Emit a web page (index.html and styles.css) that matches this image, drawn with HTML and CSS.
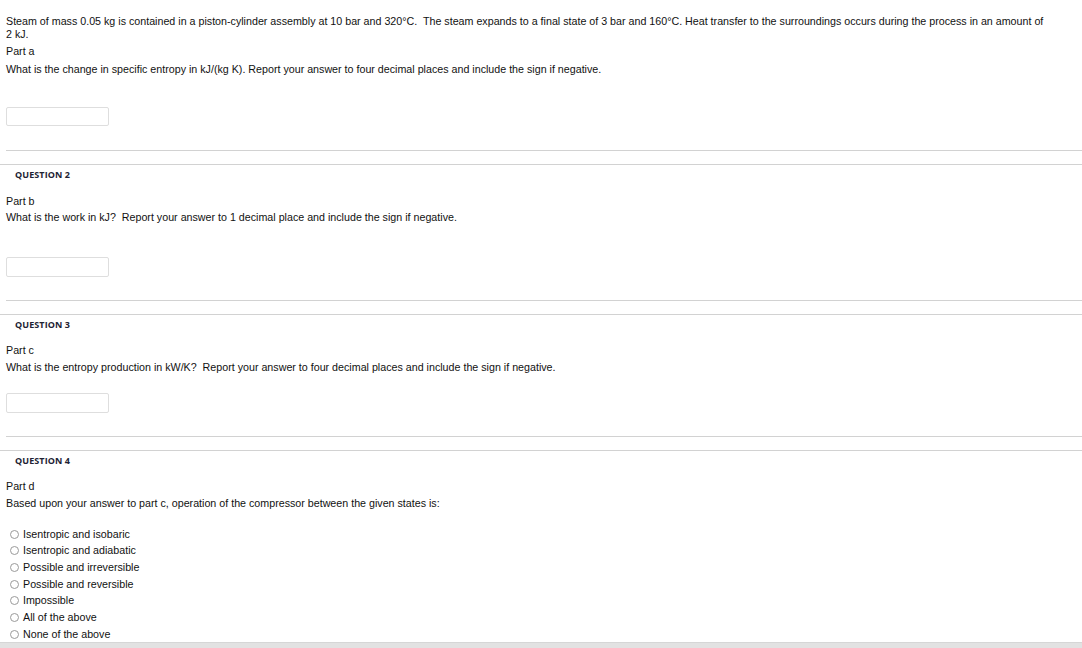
FILE: index.html
```html
<!DOCTYPE html>
<html>
<head>
<meta charset="utf-8">
<link rel="stylesheet" href="styles.css">
</head>
<body>
<div class="page">
  <section class="q q1">
    <p class="txt intro">Steam of mass 0.05 kg is contained in a piston-cylinder assembly at 10 bar and 320°C.&nbsp; The steam expands to a final state of 3 bar and 160°C. Heat transfer to the surroundings occurs during the process in an amount of 2 kJ.</p>
    <p class="txt part pa">Part a</p>
    <p class="txt ask ask-a">What is the change in specific entropy in kJ/(kg K). Report your answer to four decimal places and include the sign if negative.</p>
    <div class="field f1"></div>
  </section>

  <section class="q q2">
    <h3 class="qhead">QUESTION 2</h3>
    <p class="txt part">Part b</p>
    <p class="txt ask">What is the work in kJ?&nbsp; Report your answer to 1 decimal place and include the sign if negative.</p>
    <div class="field f2"></div>
  </section>

  <section class="q q3">
    <h3 class="qhead">QUESTION 3</h3>
    <p class="txt part">Part c</p>
    <p class="txt ask">What is the entropy production in kW/K?&nbsp; Report your answer to four decimal places and include the sign if negative.</p>
    <div class="field f3"></div>
  </section>

  <section class="q q4">
    <h3 class="qhead">QUESTION 4</h3>
    <p class="txt part">Part d</p>
    <p class="txt ask">Based upon your answer to part c, operation of the compressor between the given states is:</p>
    <ul class="opts">
      <li><span class="radio"></span>Isentropic and isobaric</li>
      <li><span class="radio"></span>Isentropic and adiabatic</li>
      <li><span class="radio"></span>Possible and irreversible</li>
      <li><span class="radio"></span>Possible and reversible</li>
      <li><span class="radio"></span>Impossible</li>
      <li><span class="radio"></span>All of the above</li>
      <li><span class="radio"></span>None of the above</li>
    </ul>
  </section>
</div>
<div class="bottombar"></div>
</body>
</html>
```

FILE: styles.css
```css
html, body {
  margin: 0;
  padding: 0;
  background: #fff;
}
body {
  font-family: "Liberation Sans", Arial, sans-serif;
  font-size: 10.7px;
  color: #111;
}
.page {
  padding-top: 15px;
}
.q {
  margin: 0;
}
.q + .q {
  border-top: 1px solid #d2d2d2;
  margin-top: 13px;
}
.q1 {
  margin-left: 6px;
  padding-bottom: 24px;
  border-bottom: 1px solid #d2d2d2;
}
.q2, .q3, .q4 {
  padding-left: 6px;
}
.q2::after, .q3::after {
  content: "";
  display: block;
  height: 1px;
  background: #d2d2d2;
  margin-top: 23px;
}

.txt {
  margin: 0;
  line-height: 13px;
  font-size: 10.7px;
}
.intro { width: 1040px; }
.pa { margin-top: 4px; }
.ask-a { margin-top: 5px; }
.qhead {
  margin: 3px 0 0 9px;
  font-family: "Open Sans", "Liberation Sans", sans-serif;
  font-weight: 700;
  font-size: 9px;
  line-height: 13px;
  color: #222233;
  letter-spacing: 0.1px;
}
.q2 .part { margin-top: 14px; }
.q2 .ask { margin-top: 3px; }
.q3 .part, .q4 .part { margin-top: 13px; }
.q3 .ask, .q4 .ask { margin-top: 4px; }

.field {
  width: 101px;
  height: 17px;
  border: 1px solid #dedede;
  border-radius: 2px;
  background: #fff;
}
.f1 { margin-top: 31px; }
.f2 { margin-top: 33px; height: 18px; }
.f3 { margin-top: 19px; height: 18px; }

.opts {
  list-style: none;
  margin: 16px 0 0 0;
  padding: 0;
}
.opts li {
  display: flex;
  align-items: center;
  height: 16.67px;
  line-height: 13px;
}
.radio {
  width: 7px;
  height: 7px;
  border: 1px solid #9a9a9a;
  border-radius: 50%;
  margin: 0 4px 0 4px;
  background: #fff;
}
.bottombar {
  position: fixed;
  left: 0;
  right: 0;
  bottom: 0;
  height: 5px;
  background: #e2e2e2;
  border-top: 1px solid #d6d6d6;
}
```
